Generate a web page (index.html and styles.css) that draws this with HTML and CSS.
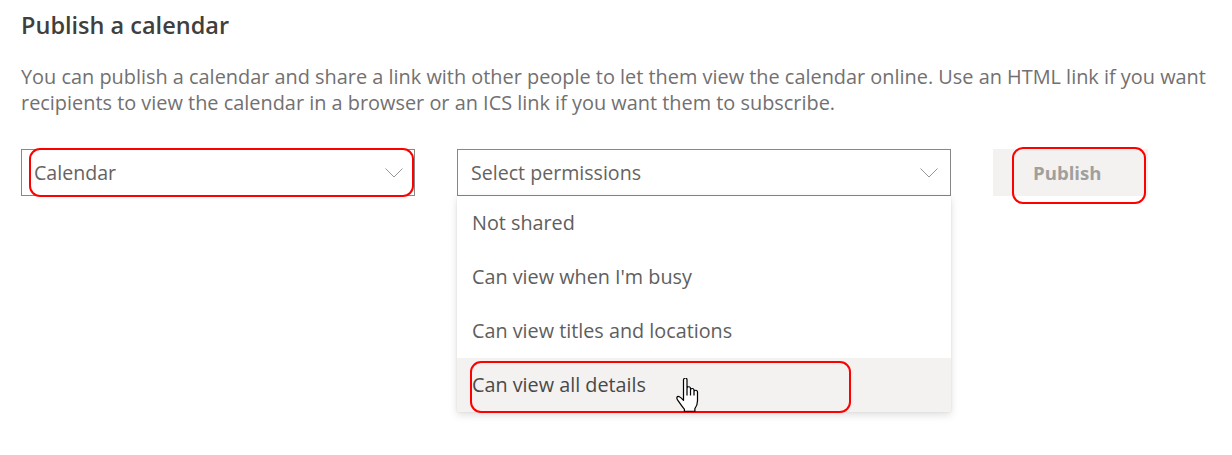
FILE: index.html
```html
<!DOCTYPE html>
<html lang="en">
<head>
<meta charset="utf-8">
<title>Publish a calendar</title>
<link rel="stylesheet" href="styles.css">
</head>
<body>
<main class="page">
  <h2 class="title">Publish a calendar</h2>
  <p class="intro">You can publish a calendar and share a link with other people to let them view the calendar online. Use an HTML link if you want recipients to view the calendar in a browser or an ICS link if you want them to subscribe.</p>
  <div class="controls">
    <div class="select select-calendar">
      <span class="select-text">Calendar</span>
      <svg class="chevron" width="18" height="10" viewBox="0 0 18 10"><path d="M0.5 0.5 L9 9 L17.5 0.5" fill="none" stroke="#999795" stroke-width="1"/></svg>
      <span class="mark mark-calendar"></span>
    </div>
    <div class="select select-perm">
      <span class="select-text">Select permissions</span>
      <svg class="chevron" width="18" height="10" viewBox="0 0 18 10"><path d="M0.5 0.5 L9 9 L17.5 0.5" fill="none" stroke="#999795" stroke-width="1"/></svg>
      <ul class="menu">
        <li class="item">Not shared</li>
        <li class="item">Can view when I'm busy</li>
        <li class="item">Can view titles and locations</li>
        <li class="item item-hover">Can view all details<span class="mark mark-item"></span>
          <svg class="cursor" width="28" height="35" viewBox="0 0 16 20"><path d="M6 12 L6 1.2 C6 0.5 6.5 0 7 0 C7.5 0 8 0.5 8 1.2 L8 7 L8 6.2 C8 5.5 8.5 5 9 5 C9.5 5 10 5.5 10 6.2 L10 7.2 C10 6.5 10.5 6 11 6 C11.5 6 12 6.5 12 7.2 L12 8 C12 7.5 12.5 7 13 7 C13.5 7 14 7.5 14 8.2 L14 13 C14 15 13.3 16.5 12.5 17.5 L12.5 19 L6.5 19 L6.5 17.8 C5.5 16.8 4 14.5 2.6 12.5 C1.8 11.3 2.3 10.2 3.4 10.6 C4.3 11 5.3 12 6 12.8 Z M8 7 L8 10 M10 7.2 L10 10 M12 8 L12 10" fill="#fff" stroke="#000" stroke-width="0.7" stroke-linejoin="round"/></svg>
        </li>
      </ul>
    </div>
    <button class="publish" type="button">Publish<span class="mark mark-publish"></span></button>
  </div>
</main>
</body>
</html>
```

FILE: styles.css
```css
html, body {
  margin: 0;
  padding: 0;
  background: #ffffff;
}
body {
  font-family: "Open Sans", "Noto Sans", "Liberation Sans", sans-serif;
  color: #605e5c;
  width: 1232px;
  height: 455px;
  overflow: hidden;
}
.page {
  padding: 0 0 0 21px;
}
.title {
  margin: 0;
  padding-top: 8px;
  font-size: 23.5px;
  font-weight: 600;
  color: #403f3e;
  line-height: 34px;
}
.intro {
  margin: 22px 0 0 0;
  font-size: 19.9px;
  line-height: 26px;
  color: #727070;
  width: 1200px;
}
.controls {
  display: flex;
  align-items: flex-start;
  margin-top: 33px;
}
.select {
  position: relative;
  box-sizing: border-box;
  height: 47px;
  border: 1px solid #8a8886;
  display: flex;
  align-items: center;
  justify-content: space-between;
  background: #fff;
}
.select-calendar {
  width: 394px;
  padding: 0 11px 0 12px;
}
.select-perm {
  width: 494px;
  margin-left: 42px;
  padding: 0 12px 0 13px;
}
.select-text {
  font-size: 19.6px;
  color: #656361;
}
.chevron {
  display: block;
}
.menu {
  position: absolute;
  left: -1px;
  top: 46px;
  width: 494px;
  margin: 0;
  padding: 0;
  list-style: none;
  background: #fff;
  box-shadow: 0 3px 8px rgba(0,0,0,0.13), 0 0 2px rgba(0,0,0,0.08);
}
.item {
  position: relative;
  height: 54px;
  line-height: 54px;
  padding-left: 15px;
  font-size: 19.8px;
  color: #605e5c;
}
.item-hover {
  background: #f3f2f1;
  color: #4a4847;
}
.publish {
  position: relative;
  margin-left: 42px;
  width: 155px;
  height: 47px;
  border: none;
  background: #f3f2f1;
  font-family: inherit;
  font-size: 18.6px;
  font-weight: 700;
  color: #a19f9d;
  text-align: left;
  padding: 0 0 0 40px;
}
.mark {
  position: absolute;
  box-sizing: border-box;
  border: 2.6px solid #ff0000;
  border-radius: 11px;
  pointer-events: none;
}
.mark-calendar {
  left: 7px;
  top: -2px;
  width: 385px;
  height: 49px;
}
.mark-item {
  left: 13px;
  top: 3px;
  width: 381px;
  height: 52px;
}
.mark-publish {
  left: 19px;
  top: -2px;
  width: 134px;
  height: 57px;
}
.cursor {
  position: absolute;
  left: 216px;
  top: 20px;
}
```
